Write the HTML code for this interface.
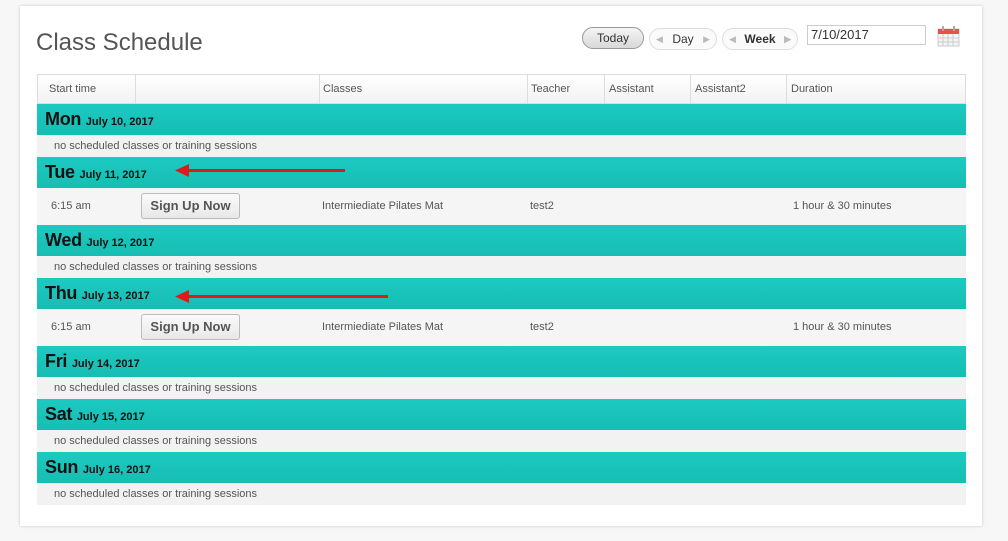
<!DOCTYPE html>
<html><head><style>
body{margin:0;background:#f7f7f7;font-family:"Liberation Sans",sans-serif;width:1008px;height:541px;overflow:hidden;position:relative}
.card{position:absolute;left:20px;top:6px;width:962px;height:520px;background:#fff;box-shadow:0 0 3px rgba(0,0,0,.2)}
h1{position:absolute;left:36px;top:29px;margin:0;font-weight:normal;font-size:24px;color:#555}
.btn{position:absolute;top:28px;border:1px solid #bbb;border-radius:11px;font-size:12px;color:#333;line-height:20px;text-align:center;box-sizing:border-box;height:22px}
.tbl{position:absolute;left:37px;top:74px;width:929px}
.hd{height:30px;border:1px solid #ddd;background:linear-gradient(#fff,#f2f2f2);position:relative;box-sizing:border-box;font-size:11px;color:#555}
.hd span{position:absolute;top:8px}
.hd i{position:absolute;top:0;bottom:0;border-left:1px solid #ddd}
.day{height:31px;background:linear-gradient(#1ccac1,#17bdb3);position:relative}
.day b{position:absolute;left:8px;top:5px;font-size:18px;color:#111;letter-spacing:-0.3px}
.day b small{font-size:11px;letter-spacing:0}
.empty{height:22px;background:#f2f2f2;font-size:11px;color:#555;line-height:22px;padding-left:17px}
.cls{height:37px;background:#f5f5f5;position:relative;font-size:11px;color:#555}
.cls span{position:absolute;top:12px}
.su{position:absolute;left:104px;top:5px;border:1px solid #bbb;border-radius:3px;background:linear-gradient(#fafafa,#e8e8e8);font-size:13px;font-weight:bold;color:#555;text-align:center;line-height:24px;box-sizing:border-box;width:99px;height:26px}
.arrow{position:absolute;height:3px;background:#e01a1a}
</style></head><body>
<div class="card"></div>
<h1>Class Schedule</h1>
<div class="btn" style="left:582px;width:62px;background:linear-gradient(#f5f5f5,#d8d8d8);border-color:#999;top:27px">Today</div>
<div class="btn" style="left:649px;width:68px;background:#fafafa;border-color:#ddd"><span style="color:#bbb;font-size:9px;position:absolute;left:6px">◀</span>Day<span style="color:#bbb;font-size:9px;position:absolute;right:6px">▶</span></div>
<div class="btn" style="left:722px;width:76px;background:#fafafa;border-color:#ddd;font-weight:bold"><span style="color:#bbb;font-size:9px;position:absolute;left:6px;font-weight:normal">◀</span>Week<span style="color:#bbb;font-size:9px;position:absolute;right:6px">▶</span></div>
<div style="position:absolute;left:807px;top:25px;width:119px;border:1px solid #ccc;font-size:13px;color:#333;padding-left:3px;box-sizing:border-box;line-height:17px;height:20px">7/10/2017</div>
<svg style="position:absolute;left:937px;top:26px" width="23" height="21" viewBox="0 0 23 21"><rect x="1" y="3" width="21" height="17" fill="#f4f4f4" stroke="#ccc"/><rect x="1" y="3" width="21" height="5" fill="#e85050"/><path d="M1 12H22M1 16H22M6 8V20M11 8V20M16 8V20" stroke="#ccc"/><rect x="5" y="0" width="2" height="5" fill="#aaa"/><rect x="16" y="0" width="2" height="5" fill="#aaa"/></svg>
<div class="tbl">
<div class="hd"><span style="left:11px">Start time</span><i style="left:97px"></i><i style="left:281px"></i><span style="left:285px">Classes</span><i style="left:489px"></i><span style="left:493px">Teacher</span><i style="left:566px"></i><span style="left:571px">Assistant</span><i style="left:652px"></i><span style="left:657px">Assistant2</span><i style="left:748px"></i><span style="left:753px">Duration</span></div>
<div class="day"><b>Mon <small>July 10, 2017</small></b></div>
<div class="empty">no scheduled classes or training sessions</div>
<div class="day"><b>Tue <small>July 11, 2017</small></b></div>
<div class="cls"><span style="left:14px">6:15 am</span><div class="su">Sign Up Now</div><span style="left:285px">Intermiediate Pilates Mat</span><span style="left:493px">test2</span><span style="left:756px">1 hour &amp; 30 minutes</span></div>
<div class="day"><b>Wed <small>July 12, 2017</small></b></div>
<div class="empty">no scheduled classes or training sessions</div>
<div class="day"><b>Thu <small>July 13, 2017</small></b></div>
<div class="cls"><span style="left:14px">6:15 am</span><div class="su">Sign Up Now</div><span style="left:285px">Intermiediate Pilates Mat</span><span style="left:493px">test2</span><span style="left:756px">1 hour &amp; 30 minutes</span></div>
<div class="day"><b>Fri <small>July 14, 2017</small></b></div>
<div class="empty">no scheduled classes or training sessions</div>
<div class="day"><b>Sat <small>July 15, 2017</small></b></div>
<div class="empty">no scheduled classes or training sessions</div>
<div class="day"><b>Sun <small>July 16, 2017</small></b></div>
<div class="empty">no scheduled classes or training sessions</div>
</div>
<div class="arrow" style="left:185px;top:169px;width:160px"></div>
<svg style="position:absolute;left:175px;top:164px" width="14" height="13"><path d="M0 6.5L14 0V13Z" fill="#e01a1a"/></svg>
<div class="arrow" style="left:185px;top:295px;width:203px"></div>
<svg style="position:absolute;left:175px;top:290px" width="14" height="13"><path d="M0 6.5L14 0V13Z" fill="#e01a1a"/></svg>
</body></html>
